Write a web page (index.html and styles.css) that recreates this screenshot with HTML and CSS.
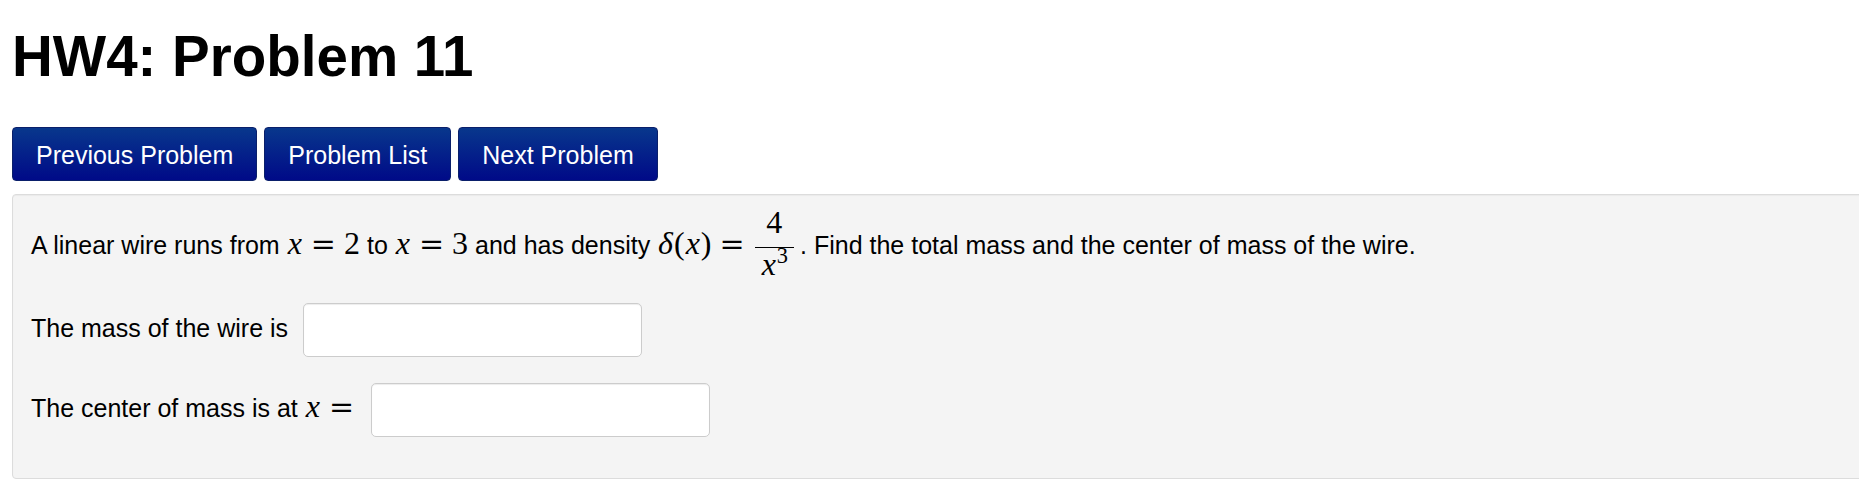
FILE: index.html
```html
<!DOCTYPE html>
<html lang="en">
<head>
<meta charset="UTF-8" />
<title>HW4: Problem 11</title>
<link rel="stylesheet" href="styles.css">
</head>
<body>

<h1 class="page-title">HW4: Problem 11</h1>

<div class="nav-buttons">
  <a class="nav-btn" href="#">Previous Problem</a>
  <a class="nav-btn" href="#">Problem List</a>
  <a class="nav-btn" href="#">Next Problem</a>
</div>

<div class="problem">
  <p class="statement">A linear wire runs from <span class="math"><i>x</i><span class="rel">=</span>2</span> to <span class="math"><i>x</i><span class="rel">=</span>3</span> and has density <span class="math"><i>δ</i>(<i>x</i>)<span class="rel">=</span><span class="frac"><span class="num">4</span><span class="den"><i>x</i><sup>3</sup></span></span></span>. Find the total mass and the center of mass of the wire.</p>

  <p class="answer-row first">The mass of the wire is <input class="answer" type="text"></p>

  <p class="answer-row">The center of mass is at <span class="math"><i>x</i><span class="rel">=</span></span> <input class="answer after-math" type="text"></p>
</div>

</body>
</html>
```

FILE: styles.css
```css
/* Reset */
*, *::before, *::after {
  box-sizing: border-box;
}
html {
  overflow: hidden;
}
body {
  margin: 0;
  padding: 24px 12px 0;
  font-family: "Liberation Sans", Arial, sans-serif;
  font-size: 25px;
  color: #000;
  background: #fff;
}

.page-title {
  margin: 0;
  font-size: 56.5px;
  line-height: 66px;
  font-weight: bold;
}

.nav-buttons {
  display: flex;
  gap: 7px;
  margin-top: 37px;
}
.nav-btn {
  display: block;
  padding: 13px 23px 11px;
  line-height: 28px;
  font-size: 25px;
  color: #fff;
  text-decoration: none;
  background: linear-gradient(to bottom, #08378c 0%, #000a88 100%);
  border: 1px solid #0a1f6a;
  border-radius: 4px;
}

.problem {
  margin-top: 13px;
  margin-right: -40px;
  padding: 12px 18px 41px;
  background: #f4f4f4;
  border: 1px solid #dcdcdc;
  border-radius: 4px;
  box-shadow: inset 0 1px 1px rgba(0,0,0,0.04);
}
.problem p {
  margin: 0;
}
.problem .answer-row {
  margin-top: 26px;
}
.problem .answer-row.first {
  margin-top: 24px;
}

/* math, roughly like MathJax TeX output */
.math {
  font-family: "Liberation Serif", "DejaVu Serif", serif;
  font-size: 32px;
  line-height: 28px;
}
.math i {
  font-style: italic;
  padding: 0 1px;
}
.rel {
  font-family: "DejaVu Serif", serif;
  font-size: 30px;
  margin: 0 8px;
}

.frac {
  display: inline-block;
  vertical-align: -21px;
  text-align: center;
  margin: 0 6px 0 2px;
}
.num {
  display: block;
  line-height: 30px;
  padding: 0 6px 10px;
  border-bottom: 1.5px solid #000;
}
.den {
  display: block;
  line-height: 30px;
  padding: 1px 6px 0;
}
.den sup {
  font-size: 0.7em;
  line-height: 0;
  vertical-align: 0.55em;
}

.answer {
  width: 339px;
  height: 54px;
  margin: 0 0 0 8px;
  vertical-align: middle;
  background: #fff;
  border: 1px solid #ccc;
  border-radius: 5px;
  box-shadow: inset 0 1px 1px rgba(0,0,0,0.075);
  font-size: 25px;
}
.answer.after-math {
  margin-left: 2px;
}
```
